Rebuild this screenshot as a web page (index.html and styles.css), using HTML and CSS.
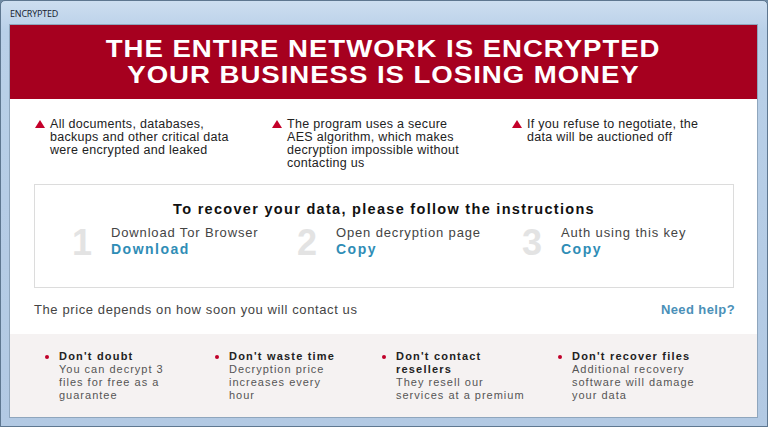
FILE: index.html
```html
<!DOCTYPE html>
<html>
<head>
<meta charset="utf-8">
<link rel="stylesheet" href="styles.css">
</head>
<body>
<div class="window">
  <div class="titlebar">ENCRYPTED</div>
  <div class="content">
    <div class="banner">
      <span class="bline">THE ENTIRE NETWORK IS ENCRYPTED</span>
      <span class="bline">YOUR BUSINESS IS LOSING MONEY</span>
    </div>
    <div class="facts">
      <div class="fact fact1"><span class="tri"></span><p>All documents, databases, backups and other critical data were encrypted and leaked</p></div>
      <div class="fact fact2"><span class="tri"></span><p>The program uses a secure AES algorithm, which makes decryption impossible without contacting us</p></div>
      <div class="fact fact3"><span class="tri"></span><p>If you refuse to negotiate, the data will be auctioned off</p></div>
    </div>
    <div class="box">
      <div class="box-title">To recover your data, please follow the instructions</div>
      <div class="steps">
        <div class="step"><span class="num">1</span><div><div class="label">Download Tor Browser</div><div class="link">Download</div></div></div>
        <div class="step"><span class="num">2</span><div><div class="label">Open decryption page</div><div class="link">Copy</div></div></div>
        <div class="step"><span class="num">3</span><div><div class="label">Auth using this key</div><div class="link">Copy</div></div></div>
      </div>
    </div>
    <div class="price">
      <span>The price depends on how soon you will contact us</span>
      <span class="help">Need help?</span>
    </div>
    <div class="donts">
      <div class="dont d1"><span class="dot"></span><div><div class="dt">Don't doubt</div><div class="dd">You can decrypt 3 files for free as a guarantee</div></div></div>
      <div class="dont d2"><span class="dot"></span><div><div class="dt">Don't waste time</div><div class="dd">Decryption price increases every hour</div></div></div>
      <div class="dont d3"><span class="dot"></span><div><div class="dt">Don't contact resellers</div><div class="dd">They resell our services at a premium</div></div></div>
      <div class="dont d4"><span class="dot"></span><div><div class="dt">Don't recover files</div><div class="dd">Additional recovery software will damage your data</div></div></div>
    </div>
  </div>
</div>
</body>
</html>
```

FILE: styles.css
```css
* { box-sizing: border-box; margin: 0; padding: 0; }
html, body { width: 768px; height: 427px; overflow: hidden; background: #6f8aa3; }
body { font-family: "Liberation Sans", Arial, sans-serif; }
.window {
  width: 768px; height: 427px;
  background: linear-gradient(#cddef0, #b9d0e8 30px, #b2c9e3);
  border: 1px solid #5e7790;
  border-radius: 5px 5px 0 0;
  padding: 0 9px 8px 8px;
  display: flex; flex-direction: column;
}
.titlebar {
  height: 23px;
  font-family: "Open Sans", "Liberation Sans", sans-serif;
  font-size: 9px;
  color: #15202e;
  padding: 7px 0 0 1px;
  line-height: 11px;
  letter-spacing: -0.2px;
}
.content {
  flex: 1;
  background: #fff;
  border: 1px solid #8fa6bd;
  display: flex; flex-direction: column;
  overflow: hidden;
}
.banner {
  height: 74px;
  background: #a6001f;
  color: #fff;
  font-weight: bold;
  font-size: 23px;
  line-height: 26px;
  padding-top: 11px;
  letter-spacing: 0.8px;
  display: flex; flex-direction: column; align-items: center;
}
.bline { display: block; white-space: nowrap; transform: scaleX(1.2); }
.facts {
  display: flex;
  padding: 19px 0 0 25px;
  height: 85px;
}
.fact { display: flex; align-items: flex-start; }
.fact1 { width: 237px; }
.fact2 { width: 240px; }
.fact3 { width: 230px; }
.fact p { font-size: 12.5px; line-height: 13px; color: #222; letter-spacing: 0.3px; }
.fact1 p { width: 196px; }
.fact2 p { width: 182px; }
.fact3 p { width: 190px; }
.tri {
  width: 0; height: 0; flex: none;
  border-left: 5px solid transparent; border-right: 5px solid transparent;
  border-bottom: 8px solid #c4002a;
  margin: 2px 5px 0 0;
}
.box {
  margin: 0 0 0 24px;
  width: 700px; height: 104px;
  border: 1px solid #dcdcdc;
  padding-top: 16px;
}
.box-title {
  text-align: center; font-weight: bold; font-size: 14.5px; letter-spacing: 1.3px; color: #111;
  line-height: 16px;
}
.steps { display: flex; padding: 6px 0 0 35px; }
.step { display: flex; align-items: flex-start; width: 225px; flex: none; }
.step:last-child { width: 200px; }
.num { font-size: 36px; font-weight: bold; color: #e3e3e3; width: 41px; line-height: 40px; text-align: left; padding-left: 2px; flex: none; }
.label { font-size: 13px; color: #444; line-height: 16px; padding-top: 2px; letter-spacing: 0.85px; }
.link { font-size: 14px; font-weight: bold; color: #2f8db6; line-height: 16px; letter-spacing: 1.5px; }
.price {
  display: flex; justify-content: space-between;
  width: 701px; margin-left: 24px;
  padding-top: 14px; height: 46px;
  font-size: 13px; color: #444; letter-spacing: 0.6px;
}
.help { color: #4a90b8; font-weight: bold; letter-spacing: 0.4px; }
.donts {
  flex: 1; background: #f5f2f2;
  display: flex; padding: 16px 0 0 35px;
}
.dont { display: flex; align-items: flex-start; flex: none; }
.d1 { width: 170px; }
.d2 { width: 167px; }
.d3 { width: 176px; }
.d4 { width: 160px; }
.dot { width: 4px; height: 4px; border-radius: 50%; background: #c0002a; flex: none; margin: 5px 10px 0 0; }
.dt { font-size: 11px; font-weight: bold; color: #222; line-height: 13px; letter-spacing: 1.2px; }
.dd { font-size: 11px; color: #555; line-height: 13px; letter-spacing: 1px; }
.d1 .dd { width: 115px; }
.d2 .dd { width: 100px; }
.d3 .dd, .d3 .dt { width: 135px; }
.d4 .dd { width: 135px; }
```
